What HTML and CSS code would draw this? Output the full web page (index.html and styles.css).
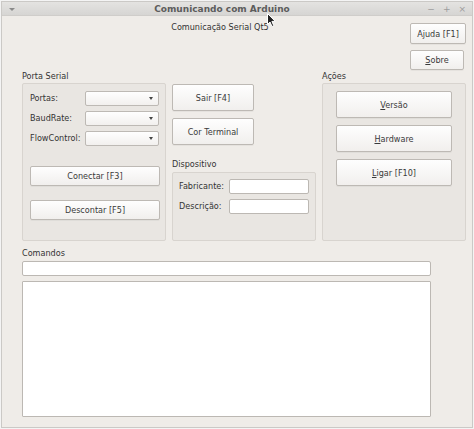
FILE: index.html
```html
<!DOCTYPE html>
<html>
<head>
<meta charset="utf-8">
<link rel="stylesheet" href="styles.css">
</head>
<body>
<div class="window">
  <div class="titlebar">
    <span class="menu-arrow"></span>
    <span class="title">Comunicando com Arduino</span>
    <span class="wm-buttons"><span>−</span><span>+</span><span>×</span></span>
  </div>
  <div class="content">
    <div class="header">
      <div class="heading">Comunicação Serial Qt5</div>
      <div class="side-buttons">
        <button class="btn btn-help">Ajuda [F1]</button>
        <button class="btn btn-about"><u>S</u>obre</button>
      </div>
    </div>
    <div class="columns">
      <div class="col">
        <div class="glabel">Porta Serial</div>
        <div class="group group-serial">
          <div class="form">
            <span class="flabel">Portas:</span><div class="combo"><span class="caret"></span></div>
            <span class="flabel">BaudRate:</span><div class="combo"><span class="caret"></span></div>
            <span class="flabel">FlowControl:</span><div class="combo"><span class="caret"></span></div>
          </div>
          <button class="btn btn-wide btn-connect">Conectar [F3]</button>
          <button class="btn btn-wide btn-disconnect">Descontar [F5]</button>
        </div>
      </div>
      <div class="col">
        <button class="btn btn-mid btn-exit">Sair [F4]</button>
        <button class="btn btn-mid btn-color">Cor Terminal</button>
        <div class="glabel glabel-dev">Dispositivo</div>
        <div class="group group-dev">
          <div class="form form-dev">
            <span class="flabel">Fabricante:</span><div class="input"></div>
            <span class="flabel">Descrição:</span><div class="input"></div>
          </div>
        </div>
      </div>
      <div class="col">
        <div class="glabel">Ações</div>
        <div class="group group-actions">
          <button class="btn btn-action"><u>V</u>ersão</button>
          <button class="btn btn-action"><u>H</u>ardware</button>
          <button class="btn btn-action"><u>L</u>igar [F10]</button>
        </div>
      </div>
    </div>
    <div class="commands">
      <div class="glabel">Comandos</div>
      <div class="input line"></div>
      <div class="input area"></div>
    </div>
  </div>
  <svg class="cursor" width="10" height="15" viewBox="0 0 10 15"><path d="M0.5 0.5 L0.5 11.5 L3 9 L5 13.5 L6.8 12.7 L4.9 8.4 L8.3 8.4 Z" fill="#222" stroke="#fff" stroke-width="1"/></svg>
</div>
</body>
</html>
```

FILE: styles.css
```css
* { box-sizing: border-box; }
html, body { margin: 0; padding: 0; background: #f4f4f4; }
body { width: 474px; height: 429px; overflow: hidden; font-family: "DejaVu Sans", sans-serif; font-size: 8.1px; color: #3a3a3a; }

.window {
  position: relative;
  margin: 1px 0 0 1px;
  width: 472px;
  height: 427px;
  border: 1px solid #cbc9c6;
  background: #efece8;
}

.titlebar {
  height: 14px;
  background: linear-gradient(#e4e3e1, #d6d5d3);
  border-bottom: 1px solid #cfcdca;
  display: flex;
  align-items: center;
  justify-content: center;
  position: relative;
}
.title { font-weight: bold; font-size: 9px; color: #5c5c5c; line-height: 14px; margin-left: -30px; }
.menu-arrow {
  position: absolute; left: 7px; top: 6px;
  width: 0; height: 0;
  border-left: 3px solid transparent; border-right: 3px solid transparent;
  border-top: 3px solid #8a8a8a;
}
.wm-buttons { position: absolute; right: 6px; top: 0; display: flex; gap: 8px; color: #9d9d9d; font-size: 9px; line-height: 14px; }

.content { padding: 0 6px 0 20px; }

.header { display: flex; padding-top: 7px; height: 55px; }
.heading { flex: 1; text-align: center; padding-left: 8px; line-height: 10px; margin-top: -1px; color: #333; }
.side-buttons { width: 56px; display: flex; flex-direction: column; gap: 6px; align-items: flex-start; }

.btn {
  font-family: inherit; font-size: 8.1px; color: #3a3a3a;
  background: linear-gradient(#fefefe, #f1efed);
  border: 1px solid #bdb9b4;
  border-radius: 2px;
  padding: 0;
  margin: 0;
  box-shadow: 0 1px 0 rgba(0,0,0,0.04);
}
.btn u { text-decoration-thickness: 1px; text-underline-offset: 1px; }
.btn-help { width: 56px; height: 21px; }
.btn-about { width: 54px; height: 20px; }

.columns { display: grid; grid-template-columns: 144px 144px 144px; column-gap: 6px; height: 170px; }
.col { display: flex; flex-direction: column; }
.glabel { line-height: 10px; color: #333; }
.group {
  flex: 1;
  margin-top: 2px;
  background: #e9e6e2;
  border: 1px solid #d8d4cf;
  border-radius: 2px;
}
.group-serial { padding: 7px 6px 0 7px; display: flex; flex-direction: column; }
.form { display: grid; grid-template-columns: 1fr 74px; row-gap: 5px; align-items: center; }
.flabel { line-height: 15px; color: #333; }
.combo {
  height: 15px; position: relative;
  background: linear-gradient(#fefefe, #f2f0ee);
  border: 1px solid #bdb9b4; border-radius: 2px;
}
.caret {
  position: absolute; right: 5px; top: 5px;
  border-left: 2.5px solid transparent; border-right: 2.5px solid transparent;
  border-top: 3px solid #444;
}
.btn-wide { height: 20px; width: 130px; }
.btn-connect { margin-top: 20px; }
.btn-disconnect { margin-top: 14px; }

.btn-mid { width: 82px; height: 27px; }
.btn-exit { margin-top: 13px; }
.btn-color { margin-top: 7px; }
.glabel-dev { margin-top: 14px; }
.group-dev { margin-top: 3px; padding: 6px 6px 0 6px; }
.form-dev { grid-template-columns: 1fr 80px; }

.group-actions { padding: 7px 13px 0; display: flex; flex-direction: column; gap: 7px; }
.btn-action { height: 27px; width: 116px; }

.commands { padding-top: 7px; display: flex; flex-direction: column; }
.input { background: #fff; border: 1px solid #bcb8b3; border-radius: 2px; }
.form .input { height: 15px; }
.line { width: 409px; height: 15px; margin-top: 3px; }
.area { width: 409px; height: 136px; margin-top: 5px; border-radius: 1px; }

.cursor { position: absolute; left: 265px; top: 11px; }
```
